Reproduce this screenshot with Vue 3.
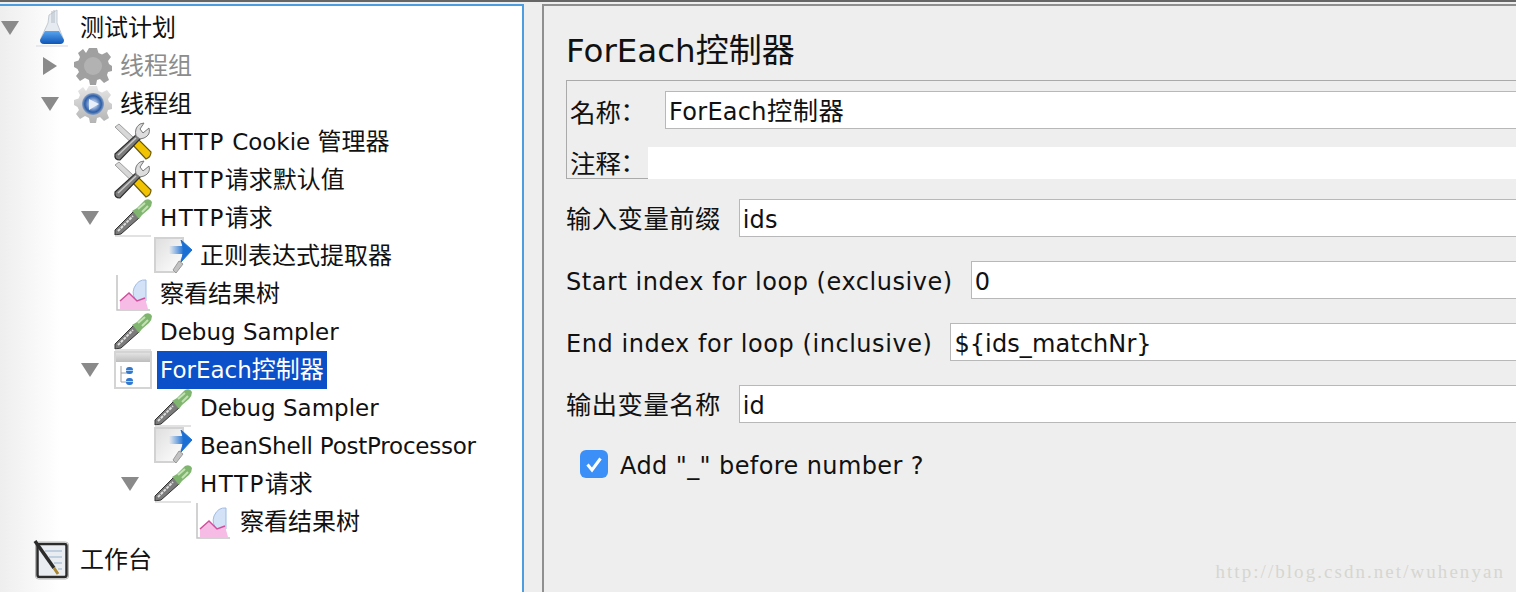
<script setup>
const rows = [
  { level: 0, arrow: 'down', icon: 'flask', text: '测试计划' },
  { level: 1, arrow: 'right', icon: 'gearOff', text: '线程组', muted: true },
  { level: 1, arrow: 'down', icon: 'gear', text: '线程组' },
  { level: 2, icon: 'tools', text: 'HTTP Cookie 管理器' },
  { level: 2, icon: 'tools', text: 'HTTP请求默认值' },
  { level: 2, arrow: 'down', icon: 'dropper', text: 'HTTP请求' },
  { level: 3, icon: 'doc', text: '正则表达式提取器' },
  { level: 2, icon: 'chart', text: '察看结果树' },
  { level: 2, icon: 'dropper', text: 'Debug Sampler' },
  { level: 2, arrow: 'down', icon: 'ctrl', text: 'ForEach控制器', selected: true },
  { level: 3, icon: 'dropper', text: 'Debug Sampler' },
  { level: 3, icon: 'doc', text: 'BeanShell PostProcessor', tight: true },
  { level: 3, arrow: 'down', icon: 'dropper', text: 'HTTP请求' },
  { level: 4, icon: 'chart', text: '察看结果树' },
  { level: 0, icon: 'bench', text: '工作台' },
]
const fields = [
  { label: '输入变量前缀', value: 'ids' },
  { label: 'Start index for loop (exclusive)', value: '0' },
  { label: 'End index for loop (inclusive)', value: '${ids_matchNr}' },
  { label: '输出变量名称', value: 'id' },
]
// Latin and CJK runs have different metrics in the original font, so each run gets its own class.
function segs(text) {
  return (text.match(/HTTP|[\u4e00-\u9fff]+|[^\u4e00-\u9fff]+?(?=HTTP|[\u4e00-\u9fff]|$)/g) || []).map((t) => ({
    t,
    cls: t === 'HTTP' ? 'http' : /[\u4e00-\u9fff]/.test(t) ? 'cjk' : '',
  }))
}
</script>

<template>
  <div class="app">
    <div class="topline"></div>
    <div class="split">
      <div class="tree">
        <div v-for="(r, i) in rows" :key="i" class="row" :style="{ paddingLeft: r.level * 40 + 'px' }">
          <span class="arrow">
            <svg v-if="r.arrow === 'down'" width="20" height="16" viewBox="0 0 20 16"><path d="M1 1H19L10 15Z" fill="#8a8a8a"/></svg>
            <svg v-else-if="r.arrow === 'right'" width="16" height="20" viewBox="0 0 16 20"><path d="M1 1V19L15 10Z" fill="#8a8a8a"/></svg>
          </span>
          <span class="icon">
            <svg width="40" height="38" viewBox="0 0 40 38">
              <defs>
                <linearGradient id="gearG" x1="0" y1="0" x2="0" y2="1"><stop offset="0" stop-color="#e6e6e6"/><stop offset="1" stop-color="#b4b4b4"/></linearGradient>
                <radialGradient id="blueG" cx=".5" cy=".5" r=".5"><stop offset=".35" stop-color="#9cb6de"/><stop offset=".75" stop-color="#2c5ea8"/><stop offset="1" stop-color="#8ea4c4"/></radialGradient>
                <linearGradient id="pageG" x1="0" y1="0" x2="1" y2="1"><stop offset="0" stop-color="#dedede"/><stop offset="1" stop-color="#ffffff"/></linearGradient>
                <linearGradient id="tailG" x1="0" y1="0" x2="1" y2="0"><stop offset="0" stop-color="#1a6fd4" stop-opacity="0"/><stop offset="1" stop-color="#1a6fd4"/></linearGradient>
                <linearGradient id="flaskG" x1="0" y1="0" x2="0" y2="1"><stop offset="0" stop-color="#5aa5ee"/><stop offset="1" stop-color="#0d56b8"/></linearGradient>
                <linearGradient id="barG" x1="0" y1="0" x2="0" y2="1"><stop offset="0" stop-color="#e2e2e2"/><stop offset="1" stop-color="#bdbdbd"/></linearGradient>
              </defs>
              <g v-if="r.icon === 'flask'">
                <path d="M15 6 L23 1 V14 L29 29 Q30 34 26 34 H10 Q6 34 7 29 L14 14Z" fill="#e6ebf1" stroke="#c3cad2"/>
                <path d="M18 2 V14 M20 1V14" stroke="#b3bcc6"/>
                <path d="M11 22 H25 L30 31 Q30 35 26 35 H10 Q6 35 6 31Z" fill="url(#flaskG)"/>
                <path d="M2 37H34" stroke="#d3d8de"/>
              </g>
              <g v-else-if="r.icon === 'gearOff' || r.icon === 'gear'">
                <path d="M15 1 H23 L24.500 6 L28 7.500 L33 5 L37 10 L34 14 L35 17 L38 19 V24 L34 25 L33 28 L35 33 L30 36 L26 32 L23 33 L22 38 H16 L15 33 L11 31 L6 34 L2 29 L5 25 L3.500 22 L0 20 V15 L4.500 13.500 L6 10 L4 6 L9 2 L12 6Z"
                  :fill="r.icon === 'gear' ? 'url(#gearG)' : '#a0a0a0'"/>
                <g v-if="r.icon === 'gear'">
                  <circle cx="19" cy="19" r="11" fill="url(#blueG)"/>
                  <path d="M15 14 L25 19 L15 25Z" fill="#e9eff8"/>
                </g>
                <circle v-else cx="19" cy="19" r="9" fill="#b2b2b2"/>
              </g>
              <g v-else-if="r.icon === 'tools'">
                <path d="M1 4 L5 1 L33 27 L29 31Z" fill="#d8d8d8" stroke="#8a8a8a" stroke-width=".800"/>
                <path d="M17 20 L23 15 L37 29 Q37 34 32 36 Z" fill="#f2c300" stroke="#6d5a05" stroke-width="1.200"/>
                <path d="M1 31 L23 11 L27 15 L6 37 Q0 37 1 31Z" fill="#7c7c7c" stroke="#2f2f2f" stroke-width="1.200"/>
                <path d="M4 32 L22 15" stroke="#c9c9c9" stroke-width="1.500"/>
                <path d="M22 13 Q20 5 26 1 L30 0 L26 6 L29 10 L35 5 Q37 12 30 15 L26 16Z" fill="#dddddd" stroke="#777"/>
              </g>
              <g v-else-if="r.icon === 'dropper'">
                <path d="M1 31 L19 13 L25 19 L7 35 L1 36Z" fill="#7b7b7b" stroke="#333"/>
                <path d="M4 32 L19 17" stroke="#e0e0e0" stroke-width="2" stroke-dasharray="3 1"/>
                <path d="M18 12 L23 9 L31 1 Q36 -1 38 3 Q38 7 35 10 L28 16 L25 20Z" fill="#7fb56f"/>
                <path d="M24 10 L31 4 M28 13 L34 7" stroke="#c3e2b2" stroke-width="2"/>
                <path d="M1 37H37" stroke="#d8d8d8" stroke-width="1.500"/>
              </g>
              <g v-else-if="r.icon === 'doc'">
                <path d="M1 1 H29 V20 L20 35 H1Z" fill="url(#pageG)" stroke="#d2d2d2" stroke-width="2"/>
                <path d="M27 3 L38 13 L27 25 L30 13Z" fill="#1a6fd4" stroke="#1a6fd4"/>
                <rect x="15" y="9" width="15" height="8" fill="url(#tailG)"/>
                <path d="M19 33 L25 24 L29 27 L22 36Z" fill="#c2c2c2" stroke="#9a9a9a"/>
              </g>
              <g v-else-if="r.icon === 'chart'">
                <path d="M3 0 V35 H36" fill="none" stroke="#c4c4c4" stroke-width="1.500"/>
                <path d="M20 13 Q24 4 32 5 V26 L24 27 Q17 21 20 13Z" fill="#d3e2f7" stroke="#9fbbe2"/>
                <path d="M6 34 V26 L15 18 L23 26 L31 23 L34 34Z" fill="#f6bce6" />
                <path d="M6 26 L15 18 L23 26 L31 23" fill="none" stroke="#cf4f9c" stroke-width="1.500"/>
              </g>
              <g v-else-if="r.icon === 'ctrl'">
                <rect x="1" y="1" width="36" height="36" fill="#fff" stroke="#d4d4d4" stroke-width="2"/>
                <rect x="2" y="2" width="34" height="9" fill="url(#barG)"/>
                <path d="M7 15 V31 H14 M7 22 H14" fill="none" stroke="#a0a0a0"/>
                <rect x="12" y="16" width="7" height="7" rx="3" fill="#2f78d2"/>
                <rect x="12" y="27" width="7" height="7" rx="3" fill="#2f78d2"/>
                <path d="M12 19.500H19M12 30.500H19" stroke="#b5d3f3"/>
              </g>
              <g v-else-if="r.icon === 'bench'">
                <rect x="3.500" y="3" width="29" height="33" rx="2" fill="#e9edf1" stroke="#2b2b2b" stroke-width="2.500"/>
                <rect x="1.500" y="1" width="33" height="37" rx="3" fill="none" stroke="#b5b5b5"/>
                <path d="M11 10H28M15 16H28M20 22H28M24 28H28" stroke="#bfcfe0" stroke-width="2"/>
                <path d="M1 0 L20 27" stroke="#2b2b2b" stroke-width="3.500"/>
                <path d="M20 27 L24 33" stroke="#a88532" stroke-width="3"/>
              </g>
            </svg>
          </span>
          <span class="label" :class="{ muted: r.muted, selected: r.selected, tight: r.tight }">
            <span v-for="(s, j) in segs(r.text)" :key="j" :class="s.cls">{{ s.t }}</span>
          </span>
        </div>
      </div>
      <div class="gutter"></div>
      <div class="panel">
        <h1 class="title">ForEach<span class="title-cjk">控制器</span></h1>
        <div class="namebox">
          <div class="name-row">
            <span class="name-label">名<span class="pull">称</span>：</span>
            <div class="field name-field">ForEach<span class="cjk-form">控制器</span></div>
          </div>
          <div class="comment-row">
            <span class="comment-label">注<span class="pull">释</span>：</span>
            <div class="comment-field"></div>
          </div>
        </div>
        <div class="fields">
          <div v-for="f in fields" :key="f.label" class="form-row">
            <span class="form-label">
              <span v-for="(s, j) in segs(f.label)" :key="j" :class="{ 'cjk-form': s.cls === 'cjk' }">{{ s.t }}</span>
            </span>
            <div class="field">{{ f.value }}</div>
          </div>
        </div>
        <div class="check-row">
          <span class="check">
            <svg width="28" height="28" viewBox="0 0 28 28"><path d="M7.500 14.500 L12 20 L20.500 8.500" fill="none" stroke="#fff" stroke-width="3"/></svg>
          </span>
          <span class="check-text">Add "_" before number ?</span>
        </div>
        <div class="watermark">http://blog.csdn.net/wuhenyan</div>
      </div>
    </div>
  </div>
</template>

<style>
html, body { margin: 0; padding: 0; background: #eeeeee; overflow: hidden; }
</style>

<style scoped>
.app {
  width: 1516px;
  height: 592px;
  overflow: hidden;
  background: #eeeeee;
  display: flex;
  flex-direction: column;
  font-family: "DejaVu Sans", "Noto Sans CJK SC", sans-serif;
  color: #111;
}
.topline { height: 2px; background: #666; flex: none; margin-bottom: 2px; }
.split { flex: 1; display: flex; min-height: 0; }
.tree {
  flex: none;
  box-sizing: border-box;
  border-top: 2px solid #4d9de0;
  border-right: 2px solid #4d9de0;
  width: 524px;
  background: linear-gradient(90deg, #eeeeee 0, #fff 60px);
  padding-top: 3px;
}
.row { display: flex; align-items: center; height: 38px; }
.arrow { width: 20px; height: 38px; flex: none; display: flex; align-items: center; justify-content: center; }
.icon { width: 40px; height: 38px; margin-left: 14px; flex: none; display: block; filter: blur(.4px); }
.icon svg { display: block; overflow: visible; }
.label {
  margin-left: 3px;
  padding: 0 3px;
  height: 38px;
  line-height: 38px;
  font-size: 23px;
  white-space: nowrap;
}
.cjk { font-size: 24px; line-height: 1; }
.http { letter-spacing: 1.500px; }
.tight { letter-spacing: -.220px; }
.muted { color: #8c8c8c; }
.selected { background: #0b4fc9; color: #fff; }
.gutter { width: 18px; flex: none; }
.panel {
  flex: 1;
  position: relative;
  min-width: 0;
  overflow: hidden;
  box-sizing: border-box;
  border-top: 2px solid #8f8f8f;
  border-left: 2px solid #8f8f8f;
  padding-left: 22px;
}
.title {
  margin: 24px 0 0;
  height: 50px;
  line-height: 42px;
  font-size: 32.500px;
  font-weight: 400;
  white-space: nowrap;
}
.title-cjk { font-size: 33px; line-height: 1; }
.namebox {
  width: 1100px;
  height: 99px;
  box-sizing: border-box;
  border: 1px solid #aaa;
  padding-left: 3px;
}
.name-row { display: flex; align-items: center; margin-top: 10px; }
.name-label { width: 95px; font-size: 25.500px; line-height: 1; flex: none; margin-top: 1px; font-family: "Noto Sans CJK TC", "Noto Sans CJK SC", sans-serif; }
.pull { letter-spacing: -7px; font-family: "Noto Sans CJK SC", sans-serif; }
.name-field { flex: 1; height: 37px; line-height: 35px; }
.comment-row { display: flex; align-items: center; margin-top: 18px; height: 32px; }
.comment-label { width: 78px; font-size: 25.500px; line-height: 1; flex: none; margin-top: -2px; font-family: "Noto Sans CJK TC", "Noto Sans CJK SC", sans-serif; }
.comment-field { flex: 1; height: 32px; background: #fff; }
.fields { margin-top: 20px; display: flex; flex-direction: column; gap: 24px; width: 1100px; }
.form-row { display: flex; align-items: center; gap: 18px; height: 38px; }
.form-label { font-size: 24px; line-height: 36px; padding-top: 4px; letter-spacing: .550px; white-space: nowrap; flex: none; }
.cjk-form { font-size: 25.300px; line-height: 1; letter-spacing: .500px; }
.field {
  flex: 1;
  height: 38px;
  line-height: 36px;
  box-sizing: border-box;
  border: 1px solid #b8b8b8;
  background: #fff;
  padding: 2px 0 0 3px;
  font-size: 24px;
  letter-spacing: .100px;
  white-space: nowrap;
}
.name-field { letter-spacing: .300px; }
.check-row { display: flex; align-items: center; margin: 27px 0 0 14px; height: 28px; gap: 12px; }
.check { width: 28px; height: 28px; border-radius: 6px; background: #3b8ff7; display: block; }
.check svg { display: block; }
.check-text { font-size: 24px; padding-top: 4px; letter-spacing: .400px; white-space: nowrap; }
.watermark {
  position: absolute;
  right: 11px;
  top: 555px;
  font-family: "Liberation Serif", serif;
  font-size: 19px;
  letter-spacing: 2.050px;
  color: #d6d6d0;
  white-space: nowrap;
}
</style>
